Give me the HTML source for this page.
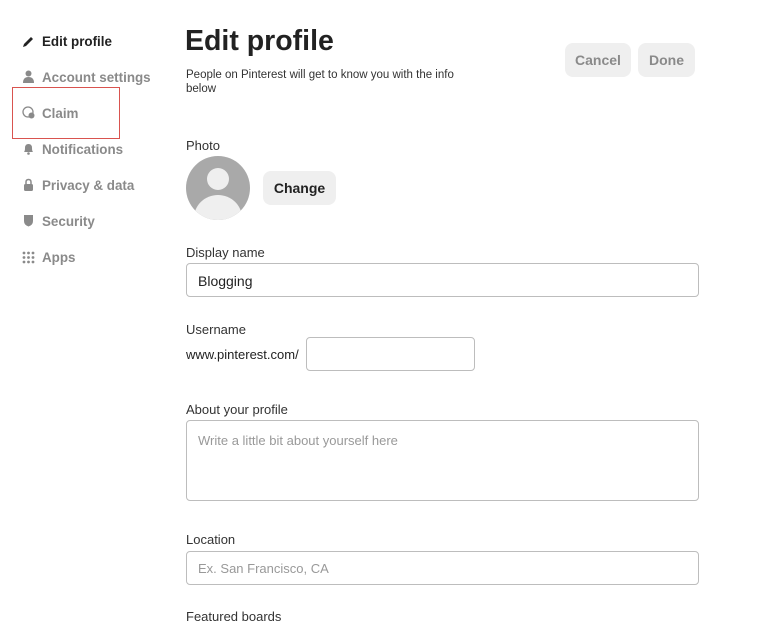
<!DOCTYPE html>
<html><head><meta charset="utf-8"><style>
*{margin:0;padding:0;box-sizing:border-box}
body{width:768px;height:626px;background:#fff;font-family:"Liberation Sans",sans-serif;position:relative;overflow:hidden;color:#333}
.a{position:absolute;white-space:nowrap}
.nav{font-size:13.4px;font-weight:bold;color:#8a8a8a}
.ic{position:absolute;left:22px;width:13px;height:13px}
.lbl{font-size:13px;color:#333}
.inp{position:absolute;border:1px solid #bdbdbd;border-radius:4px;background:#fff}
.btn{position:absolute;background:#efefef;border-radius:8px;font-weight:bold;font-size:14px;display:flex;align-items:center;justify-content:center}
</style></head><body>
<svg class="ic" style="top:35px" viewBox="0 0 13 13"><path d="M1 12 L2 9 L9 2 L11 4 L4 11 Z" fill="#222"/></svg>
<div class="a nav" style="left:42px;top:34px;color:#222">Edit profile</div>
<svg class="ic" style="top:70px" viewBox="0 0 13 13"><circle cx="6.5" cy="3.5" r="3" fill="#8a8a8a"/><path d="M1 13 Q1 7 6.5 7 Q12 7 12 13Z" fill="#8a8a8a"/></svg>
<div class="a nav" style="left:42px;top:70px">Account settings</div>
<svg class="ic" style="top:106px" viewBox="0 0 13 13"><circle cx="6" cy="6" r="5" fill="none" stroke="#8a8a8a" stroke-width="1.3"/><circle cx="9.5" cy="9.5" r="3" fill="#8a8a8a"/></svg>
<div class="a nav" style="left:42px;top:106px">Claim</div>
<div class="a" style="left:12px;top:87px;width:108px;height:52px;border:1.5px solid #d9534f"></div>
<svg class="ic" style="top:142px" viewBox="0 0 13 13"><path d="M2 10 Q3 9 3 6 Q3 2 6.5 2 Q10 2 10 6 Q10 9 11 10Z" fill="#8a8a8a"/><circle cx="6.5" cy="11.5" r="1.3" fill="#8a8a8a"/></svg>
<div class="a nav" style="left:42px;top:142px">Notifications</div>
<svg class="ic" style="top:178px" viewBox="0 0 13 13"><rect x="2" y="6" width="9" height="7" rx="1.5" fill="#8a8a8a"/><path d="M4 6 V4 Q4 1.5 6.5 1.5 Q9 1.5 9 4 V6" fill="none" stroke="#8a8a8a" stroke-width="1.5"/></svg>
<div class="a nav" style="left:42px;top:178px">Privacy &amp; data</div>
<svg class="ic" style="top:214px" viewBox="0 0 13 13"><path d="M2 1 H11 V7 Q11 11 6.5 12.5 Q2 11 2 7Z" fill="#8a8a8a"/></svg>
<div class="a nav" style="left:42px;top:214px">Security</div>
<svg class="ic" style="top:251px" viewBox="0 0 13 13" fill="#8a8a8a"><circle cx="2" cy="2" r="1.4"/><circle cx="6.5" cy="2" r="1.4"/><circle cx="11" cy="2" r="1.4"/><circle cx="2" cy="6.5" r="1.4"/><circle cx="6.5" cy="6.5" r="1.4"/><circle cx="11" cy="6.5" r="1.4"/><circle cx="2" cy="11" r="1.4"/><circle cx="6.5" cy="11" r="1.4"/><circle cx="11" cy="11" r="1.4"/></svg>
<div class="a nav" style="left:42px;top:250px">Apps</div>

<div class="a" style="left:185px;top:25px;font-size:28.5px;font-weight:bold;color:#222">Edit profile</div>
<div class="a" style="left:186px;top:68px;font-size:11.5px;line-height:14px;color:#333;white-space:normal;width:290px">People on Pinterest will get to know you with the info below</div>
<div class="btn" style="left:565px;top:43px;width:66px;height:34px;color:#8a8a8a">Cancel</div>
<div class="btn" style="left:638px;top:43px;width:57px;height:34px;color:#8a8a8a">Done</div>

<div class="a lbl" style="left:186px;top:138px">Photo</div>
<svg class="a" style="left:186px;top:156px" width="64" height="64" viewBox="0 0 64 64"><defs><clipPath id="c"><circle cx="32" cy="32" r="32"/></clipPath></defs><circle cx="32" cy="32" r="32" fill="#a9a9a9"/><g clip-path="url(#c)" fill="#efefef"><circle cx="32" cy="23" r="11"/><ellipse cx="32" cy="62" rx="24" ry="23"/></g></svg>
<div class="btn" style="left:263px;top:171px;width:73px;height:34px;color:#222">Change</div>

<div class="a lbl" style="left:186px;top:245px">Display name</div>
<div class="inp" style="left:186px;top:263px;width:513px;height:34px"></div>
<div class="a" style="left:198px;top:273px;font-size:14px;color:#222">Blogging</div>

<div class="a lbl" style="left:186px;top:322px">Username</div>
<div class="a" style="left:186px;top:347px;font-size:13px;color:#222">www.pinterest.com/</div>
<div class="inp" style="left:306px;top:337px;width:169px;height:34px"></div>

<div class="a lbl" style="left:186px;top:402px">About your profile</div>
<div class="inp" style="left:186px;top:420px;width:513px;height:81px"></div>
<div class="a" style="left:198px;top:433px;font-size:13px;color:#999">Write a little bit about yourself here</div>

<div class="a lbl" style="left:186px;top:532px">Location</div>
<div class="inp" style="left:186px;top:551px;width:513px;height:34px"></div>
<div class="a" style="left:198px;top:561px;font-size:13px;color:#999">Ex. San Francisco, CA</div>

<div class="a lbl" style="left:186px;top:609px">Featured boards</div>
</body></html>
